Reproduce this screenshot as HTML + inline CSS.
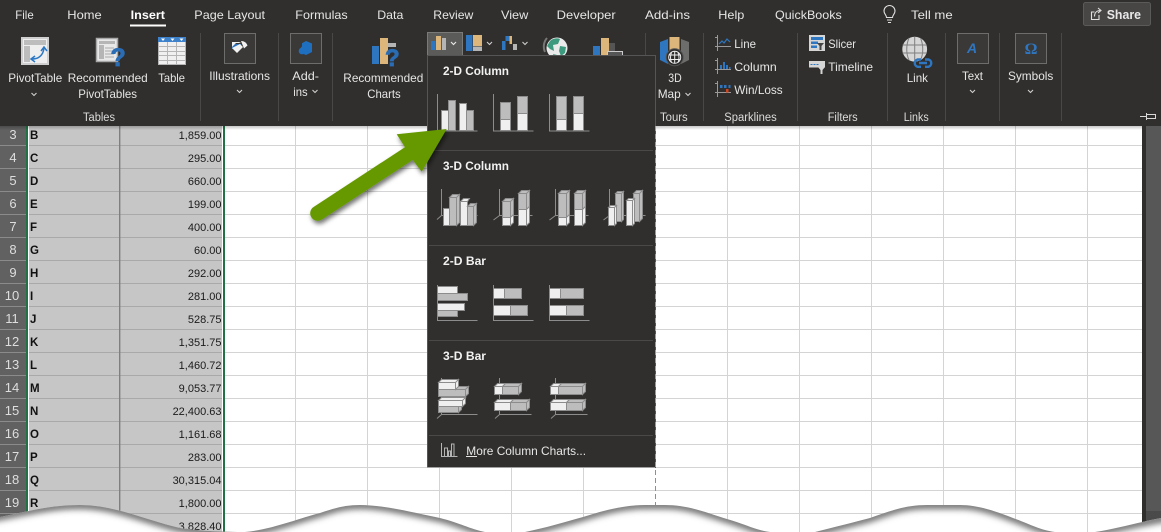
<!DOCTYPE html>
<html><head><meta charset="utf-8"><title>Excel Insert Column Chart</title>
<style>
html,body{margin:0;padding:0;background:#fff;width:1161px;height:532px;overflow:hidden}
svg{display:block;position:absolute;left:0;top:0}
text{font-family:"Liberation Sans",sans-serif}
.t{font-size:12px;fill:#e6e6e6}
.g{font-size:11.5px;fill:#dcdcdc}
.h{font-size:11.5px;font-weight:bold;fill:#f2f2f2}
.r{font-size:13px;fill:#dedede;text-anchor:middle}
.a{font-size:11.5px;font-weight:bold;fill:#111}
.v{font-size:11px;fill:#1a1a1a;text-anchor:end}
.w{fill:#efefef;stroke:#8c8c8c;stroke-width:1}
.y{fill:#bdbdbd;stroke:#8c8c8c;stroke-width:1}
.l{fill:none;stroke:#8c8c8c;stroke-width:1}
</style></head><body>
<svg width="1161" height="532" viewBox="0 0 1161 532" xmlns="http://www.w3.org/2000/svg">
<defs>
<linearGradient id="sh" x1="0" y1="0" x2="0" y2="1"><stop offset="0" stop-color="#000" stop-opacity=".22"/><stop offset="1" stop-color="#000" stop-opacity="0"/></linearGradient>
<filter id="b3" filterUnits="userSpaceOnUse" x="-20" y="480" width="1201" height="80"><feGaussianBlur stdDeviation="3.2"/></filter>
<filter id="ds" x="-20%" y="-20%" width="150%" height="150%"><feDropShadow dx="1.5" dy="3" stdDeviation="2.5" flood-color="#000" flood-opacity=".55"/></filter>
<clipPath id="wc"><path d="M0 517C30 511 50 505 80 505C115 505 145 520 180 528C200 531 225 532 245 532C270 530 300 518 320 513C335 508 345 505 360 505C385 505 415 513 440 518C460 523 470 529 485 532L525 532C545 528 565 522 583 517C605 510 625 505 645 505L665 505C690 505 710 514 727 519C745 524 755 530 770 532L815 532C835 527 855 522 870 518C890 511 905 505 927 505L960 505C980 505 1000 513 1013 518C1030 524 1040 530 1055 532L1095 532C1115 529 1140 522 1161 518L1161 540L0 540Z"/></clipPath>
</defs>

<!-- sheet -->
<rect width="1161" height="532" fill="#fff"/>
<path fill="none" stroke="#d4d4d4" d="M225 145.5H1142M225 168.5H1142M225 191.5H1142M225 214.5H1142M225 237.5H1142M225 260.5H1142M225 283.5H1142M225 306.5H1142M225 329.5H1142M225 352.5H1142M225 375.5H1142M225 398.5H1142M225 421.5H1142M225 444.5H1142M225 467.5H1142M225 490.5H1142M225 513.5H1142M295.5 126V532M367.5 126V532M439.5 126V532M511.5 126V532M583.5 126V532M727.5 126V532M799.5 126V532M871.5 126V532M943.5 126V532M1015.5 126V532M1087.5 126V532"/>
<path stroke="#8f8f8f" stroke-dasharray="5 3" d="M655.5 126V510"/>
<rect x="0" y="126" width="26" height="406" fill="#616161"/>
<rect x="26" y="126" width="2" height="406" fill="#217346"/>
<rect x="28" y="126" width="1" height="406" fill="#fff"/>
<rect x="29" y="126" width="193" height="406" fill="#c6c6c6"/>
<rect x="222" y="126" width="1" height="406" fill="#fff"/>
<rect x="223" y="126" width="2" height="406" fill="#217346"/>
<path stroke="#a9a9a9" fill="none" d="M29 145.5H222M29 168.5H222M29 191.5H222M29 214.5H222M29 237.5H222M29 260.5H222M29 283.5H222M29 306.5H222M29 329.5H222M29 352.5H222M29 375.5H222M29 398.5H222M29 421.5H222M29 444.5H222M29 467.5H222M29 490.5H222M29 513.5H222"/>
<path stroke="#8b8b8b" fill="none" d="M0 145.5H26M0 168.5H26M0 191.5H26M0 214.5H26M0 237.5H26M0 260.5H26M0 283.5H26M0 306.5H26M0 329.5H26M0 352.5H26M0 375.5H26M0 398.5H26M0 421.5H26M0 444.5H26M0 467.5H26M0 490.5H26M0 513.5H26"/>
<rect x="119" y="126" width="1.4" height="406" fill="#7f7f7f"/>
<rect x="1142" y="126" width="4" height="406" fill="#2f2e2d"/>
<rect x="1146" y="126" width="15" height="385" fill="#575757"/>
<rect x="1146" y="511" width="15" height="21" fill="#4a4a4a"/>

<text class="r" x="13" y="139">3</text><text class="a" x="30" y="139">B</text><text class="v" x="221.5" y="139">1,859.00</text>
<text class="r" x="13" y="162">4</text><text class="a" x="30" y="162">C</text><text class="v" x="221.5" y="162">295.00</text>
<text class="r" x="13" y="185">5</text><text class="a" x="30" y="185">D</text><text class="v" x="221.5" y="185">660.00</text>
<text class="r" x="13" y="208">6</text><text class="a" x="30" y="208">E</text><text class="v" x="221.5" y="208">199.00</text>
<text class="r" x="13" y="231">7</text><text class="a" x="30" y="231">F</text><text class="v" x="221.5" y="231">400.00</text>
<text class="r" x="13" y="254">8</text><text class="a" x="30" y="254">G</text><text class="v" x="221.5" y="254">60.00</text>
<text class="r" x="13" y="277">9</text><text class="a" x="30" y="277">H</text><text class="v" x="221.5" y="277">292.00</text>
<text class="r" x="12" y="300">10</text><text class="a" x="30" y="300">I</text><text class="v" x="221.5" y="300">281.00</text>
<text class="r" x="12" y="323">11</text><text class="a" x="30" y="323">J</text><text class="v" x="221.5" y="323">528.75</text>
<text class="r" x="12" y="346">12</text><text class="a" x="30" y="346">K</text><text class="v" x="221.5" y="346">1,351.75</text>
<text class="r" x="12" y="369">13</text><text class="a" x="30" y="369">L</text><text class="v" x="221.5" y="369">1,460.72</text>
<text class="r" x="12" y="392">14</text><text class="a" x="30" y="392">M</text><text class="v" x="221.5" y="392">9,053.77</text>
<text class="r" x="12" y="415">15</text><text class="a" x="30" y="415">N</text><text class="v" x="221.5" y="415">22,400.63</text>
<text class="r" x="12" y="438">16</text><text class="a" x="30" y="438">O</text><text class="v" x="221.5" y="438">1,161.68</text>
<text class="r" x="12" y="461">17</text><text class="a" x="30" y="461">P</text><text class="v" x="221.5" y="461">283.00</text>
<text class="r" x="12" y="484">18</text><text class="a" x="30" y="484">Q</text><text class="v" x="221.5" y="484">30,315.04</text>
<text class="r" x="12" y="507">19</text><text class="a" x="30" y="507">R</text><text class="v" x="221.5" y="507">1,800.00</text>
<text class="v" x="221.5" y="530">3,828.40</text>

<!-- ribbon -->
<rect x="0" y="126" width="1142" height="4" fill="url(#sh)"/>
<rect width="1161" height="126" fill="#302f2d"/>

<!-- tabs -->
<text class="t" x="15.3" y="19" textLength="18.4" lengthAdjust="spacingAndGlyphs">File</text>
<text class="t" x="67.3" y="19" textLength="34.4" lengthAdjust="spacingAndGlyphs">Home</text>
<text class="t" x="130.7" y="19" textLength="34.3" lengthAdjust="spacingAndGlyphs" style="fill:#fff;font-weight:bold">Insert</text>
<rect x="130" y="24.5" width="36" height="2" fill="#fff"/>
<text class="t" x="194.3" y="19" textLength="70.7" lengthAdjust="spacingAndGlyphs">Page Layout</text>
<text class="t" x="295.3" y="19" textLength="52.4" lengthAdjust="spacingAndGlyphs">Formulas</text>
<text class="t" x="377.3" y="19" textLength="26" lengthAdjust="spacingAndGlyphs">Data</text>
<text class="t" x="433.3" y="19" textLength="40" lengthAdjust="spacingAndGlyphs">Review</text>
<text class="t" x="501" y="19" textLength="27.3" lengthAdjust="spacingAndGlyphs">View</text>
<text class="t" x="556.7" y="19" textLength="59" lengthAdjust="spacingAndGlyphs">Developer</text>
<text class="t" x="645" y="19" textLength="45" lengthAdjust="spacingAndGlyphs">Add-ins</text>
<text class="t" x="718.3" y="19" textLength="26" lengthAdjust="spacingAndGlyphs">Help</text>
<text class="t" x="775" y="19" textLength="66.7" lengthAdjust="spacingAndGlyphs">QuickBooks</text>
<text class="t" x="911" y="19" textLength="41.7" lengthAdjust="spacingAndGlyphs">Tell me</text>
<!-- bulb -->
<path fill="none" stroke="#e0e0e0" stroke-width="1.1" d="M886.5 17.5c0-2.5-2.5-3.5-2.5-6.5a5.5 5.5 0 0 1 11 0c0 3-2.5 4-2.5 6.5zM887 20h5M888 22.5h3"/>
<!-- share -->
<rect x="1083.5" y="2.5" width="67" height="23" rx="2" fill="#474645" stroke="#5a5a58"/>
<path fill="none" stroke="#e0e0e0" stroke-width="1.1" d="M1099 15v4.500h-7.500V12h3M1094.500 16.500c0-4 2.500-6 6-6M1098 8l3 2.500-3 2.500"/>
<text x="1106.7" y="19" textLength="34.3" lengthAdjust="spacingAndGlyphs" style="font-size:12.5px;font-weight:bold;fill:#e8e8e8">Share</text>

<!-- separators -->
<path stroke="#494847" fill="none" d="M200.5 33V121M278.5 33V121M332.5 33V121M645.5 33V121M703.5 33V121M797.5 33V121M887.5 33V121M945.5 33V121M999.5 33V121M1061.5 33V121"/>

<!-- ribbon labels -->
<text class="t" x="8.3" y="82" textLength="54" lengthAdjust="spacingAndGlyphs">PivotTable</text>
<text class="t" x="67.7" y="82" textLength="80" lengthAdjust="spacingAndGlyphs">Recommended</text>
<text class="t" x="78.3" y="98" textLength="58.7" lengthAdjust="spacingAndGlyphs">PivotTables</text>
<text class="t" x="158.3" y="82" textLength="26.7" lengthAdjust="spacingAndGlyphs">Table</text>
<text class="g" x="83" y="121" textLength="32" lengthAdjust="spacingAndGlyphs">Tables</text>
<text class="t" x="209.3" y="80" textLength="60.7" lengthAdjust="spacingAndGlyphs">Illustrations</text>
<text class="t" x="292.3" y="80" textLength="26.7" lengthAdjust="spacingAndGlyphs">Add-</text>
<text class="t" x="293.3" y="96" textLength="14.4" lengthAdjust="spacingAndGlyphs">ins</text>
<text class="t" x="343.3" y="82" textLength="80" lengthAdjust="spacingAndGlyphs">Recommended</text>
<text class="t" x="367.3" y="98" textLength="33.4" lengthAdjust="spacingAndGlyphs">Charts</text>
<text class="t" x="668.3" y="82" textLength="13.4" lengthAdjust="spacingAndGlyphs">3D</text>
<text class="t" x="657.7" y="98" textLength="23" lengthAdjust="spacingAndGlyphs">Map</text>
<text class="g" x="660" y="121" textLength="27.7" lengthAdjust="spacingAndGlyphs">Tours</text>
<text class="t" x="734.3" y="48" textLength="21.7" lengthAdjust="spacingAndGlyphs">Line</text>
<text class="t" x="734.3" y="71" textLength="42.4" lengthAdjust="spacingAndGlyphs">Column</text>
<text class="t" x="734.3" y="94" textLength="48.4" lengthAdjust="spacingAndGlyphs">Win/Loss</text>
<text class="g" x="724.3" y="121" textLength="52.4" lengthAdjust="spacingAndGlyphs">Sparklines</text>
<text class="t" x="828.3" y="48" textLength="27.7" lengthAdjust="spacingAndGlyphs">Slicer</text>
<text class="t" x="828.3" y="71" textLength="44.7" lengthAdjust="spacingAndGlyphs">Timeline</text>
<text class="g" x="827.7" y="121" textLength="30" lengthAdjust="spacingAndGlyphs">Filters</text>
<text class="t" x="906.7" y="82" textLength="21.3" lengthAdjust="spacingAndGlyphs">Link</text>
<text class="g" x="903.7" y="121" textLength="25" lengthAdjust="spacingAndGlyphs">Links</text>
<text class="t" x="962" y="80" textLength="21" lengthAdjust="spacingAndGlyphs">Text</text>
<text class="t" x="1008" y="80" textLength="45.3" lengthAdjust="spacingAndGlyphs">Symbols</text>

<!-- chevrons -->
<path fill="none" stroke="#d0d0d0" stroke-width="1.1" d="M31.5 93l2.5 2.500 2.500-2.500M237 90l2.500 2.500 2.500-2.500M312.500 90l2.500 2.500 2.500-2.500M685.500 93l2.500 2.500 2.500-2.500M970 90l2.500 2.500 2.500-2.500M1028 90l2.500 2.500 2.500-2.500M487 42l2.500 2.500 2.500-2.500M522.500 42l2.500 2.500 2.500-2.500"/>

<!-- PivotTable icon -->
<rect x="21" y="37" width="28" height="28" fill="#cfcfcf"/><rect x="23" y="39" width="24" height="24" fill="#efefef"/>
<rect x="24" y="40" width="22" height="5" fill="#bdbdbd"/><rect x="24" y="46" width="6" height="16" fill="#bdbdbd"/>
<path fill="none" stroke="#2b78c5" stroke-width="1.5" d="M32 59c6 0 11-3 12-11M41 51l3-4 3 4M35 56l-4 3 4 3"/>
<!-- Rec pivot -->
<rect x="96.5" y="38.5" width="21" height="23" fill="#e8e8e8" stroke="#a8a8a8" stroke-width="1.5"/>
<rect x="99" y="41" width="16" height="3" fill="#b5b5b5"/><rect x="99" y="45" width="5" height="14" fill="#b5b5b5"/><path stroke="#aaa" d="M105 48h9M105 51h9M105 54h9M105 57h9"/>
<text x="110.5" y="66" style="font-size:25px;font-weight:bold;fill:#2a6db5;stroke:#2a6db5;stroke-width:.8">?</text>
<!-- Table icon -->
<rect x="158" y="37" width="28" height="28" fill="#f0f0f0"/><rect x="158" y="37" width="28" height="5" fill="#3f82cc"/>
<path fill="none" stroke="#b5b5b5" d="M158 46.5h28M158 51.5h28M158 55.5h28M158 60.5h28M158 64.5h28M158.5 42v23M167.5 42v23M176.5 42v23M185.5 42v23"/>
<path fill="#fff" d="M161 38.5h4l-2 2.5zM170.5 38.500h4l-2 2.500zM179.500 38.500h4l-2 2.500z"/>
<!-- Illustrations box -->
<rect x="224.5" y="33.500" width="31" height="30" fill="#3a3938" stroke="#6d6d6b"/>
<path fill="#2b6fb8" d="M232 44h9v5h-9z"/><path fill="#f2f2f2" d="M232 48l5 5 6-6-3-3zM232 47l4-4h5l-2-1h-7z"/><path fill="#f2f2f2" d="M241 41a6.500 6.500 0 0 1 6.500 4.500l-3.500 3z"/>
<!-- Add-ins box -->
<rect x="290.5" y="33.500" width="31" height="30" fill="#3a3938" stroke="#6d6d6b"/>
<path fill="#1f6fc0" d="M306 41l6 2.500v8.500l-6 3-3-1.200v-4l-3-1 2-2.500v-3z"/><circle cx="302" cy="51" r="3.300" fill="#1f6fc0"/>
<!-- Rec charts -->
<rect x="372" y="46" width="7" height="18" fill="#2f76c0"/><rect x="380" y="38" width="8" height="26" fill="#dcb67a"/><rect x="388" y="43" width="8" height="4" fill="#b5b5b5"/>
<text x="385" y="66" style="font-size:24px;font-weight:bold;fill:#2a6db5;stroke:#2a6db5;stroke-width:.8">?</text>

<!-- chart type row -->
<rect x="427.5" y="32.500" width="35" height="23" fill="#5b5b5a" stroke="#7a7a78"/>
<rect x="431" y="41" width="4.500" height="9" fill="#2f76c0"/><rect x="436" y="36" width="5" height="14" fill="#dcb67a"/><rect x="442" y="38" width="4" height="12" fill="#b5b5b5"/>
<path fill="none" stroke="#e6e6e6" stroke-width="1.200" d="M451 42l2.500 2.500 2.500-2.500"/>
<rect x="466" y="35" width="6.500" height="16" fill="#2f76c0"/><rect x="473" y="35" width="9" height="11" fill="#dcb67a"/><rect x="473" y="46.500" width="9" height="4.500" fill="#b5b5b5"/>
<rect x="502" y="41" width="3.500" height="9" fill="#2f76c0"/><path fill="#2f76c0" d="M505.500 41v-5h4v5z"/><rect x="509.500" y="36" width="2.500" height="8" fill="#dcb67a"/><rect x="513" y="44" width="4" height="6" fill="#b5b5b5"/>
<path fill="none" stroke="#777" stroke-width="2" d="M547 38a13 13 0 0 0-2 14"/>
<circle cx="557" cy="48" r="10.500" fill="#eaeaea"/><path fill="#3d9a7f" d="M550 41c3-3 8-3 10-2l-2 5-5 1 1 6-4-2-3-3zM560 46l6 1-1 6-4 3-2-5zM553 54l4 1v3l-3-1z"/>
<rect x="593" y="46" width="7" height="10" fill="#2f76c0"/><rect x="601" y="38" width="8" height="18" fill="#dcb67a"/><rect x="609" y="43" width="6" height="13" fill="#555"/><rect x="607.500" y="51.500" width="15" height="6" fill="#555" stroke="#ccc"/>

<!-- 3D Map -->
<path fill="#2f76c0" d="M660 42l8-3v25l-8-4z"/><path fill="#dcb67a" d="M669.500 37h10v15h-10z"/><path fill="#6d6d6b" d="M681 39l8 3v18l-8 4z"/>
<circle cx="674.7" cy="57.300" r="8.500" fill="#2c2b2a" stroke="#555"/><g fill="none" stroke="#eee"><circle cx="674.7" cy="57.300" r="6"/><path d="M668.700 55h12M668.700 59.500h12M674.700 51.300v12M671.500 52.500c-1.200 3-1.200 7 0 10M678 52.500c1.200 3 1.200 7 0 10"/></g>

<!-- sparklines -->
<g fill="none" stroke="#9a9a9a"><path d="M717.500 35v16M715 37.500h3M715 46.500h16M717.500 58v16M715 60.500h3M715 69.500h16M717.500 81v16M715 83.500h3M715 92.500h16"/></g>
<path fill="none" stroke="#2f76c0" stroke-width="1.200" d="M719 44l3-3 2 2 3-4 3 3"/>
<path fill="#2f76c0" d="M720 65h2v4h-2zM723 62h2v7h-2zM726 65h2v4h-2zM729 67h1.500v2H729z"/>
<path fill="#2f76c0" d="M720 85h2.500v3H720zM724 85h2.500v3H724zM728.500 85h2v3h-2z"/><rect x="726" y="89" width="2.500" height="3.500" fill="#d0431f"/>

<!-- slicer -->
<rect x="809" y="35" width="16" height="16" fill="#d5d5d5"/><rect x="811" y="37" width="12" height="3" fill="#2f76c0"/><rect x="811" y="41.500" width="7" height="2.500" fill="#2f76c0"/><rect x="811" y="45.500" width="6" height="2.500" fill="#2f76c0"/><path fill="#444" d="M817 43h7l-2.500 3v4h-2v-4z"/>
<rect x="809" y="61" width="16" height="6.500" fill="#d5d5d5"/><path stroke="#2f76c0" stroke-dasharray="2 1" d="M810.500 64.500h9"/><path fill="#d5d5d5" d="M818 67h7l-2.500 3v4h-2v-4z"/>

<!-- link -->
<circle cx="914.7" cy="49.200" r="12.400" fill="#d6d6d6"/><g fill="none" stroke="#7f7f7f"><path d="M902.500 45h24.400M902.500 53h24.400M914.700 37v24.500M909 38c-3 7-3 16 0 22M920.500 38c3 7 3 16 0 22"/></g>
<path fill="none" stroke="#2f76c0" stroke-width="2.400" d="M921 59.500h-3.500a3.800 3.800 0 0 0 0 7.300H921M925 59.500h3.500a3.800 3.800 0 0 1 0 7.300H925M919 63h8"/>

<!-- Text / Symbols -->
<rect x="957.5" y="33.500" width="31" height="30" fill="#3a3938" stroke="#6d6d6b"/>
<text x="967" y="53" style="font-size:14px;font-weight:bold;font-style:italic;fill:#2f76c0">A</text>
<rect x="1015.5" y="33.500" width="31" height="30" fill="#3a3938" stroke="#6d6d6b"/>
<text x="1031" y="54" text-anchor="middle" style="font-size:16px;font-weight:bold;fill:#2f76c0;font-family:'Liberation Serif',serif">Ω</text>

<!-- pin -->
<path fill="none" stroke="#d8d8d8" d="M1140 116.500h6M1146.500 113v7M1146.500 114.500h9v4h-9z"/>

<!-- dropdown panel -->
<rect x="427.5" y="55.500" width="228" height="412" fill="#302f2d" stroke="#555"/>
<path stroke="#a0a0a0" d="M427 467.500h228"/>
<path stroke="#4a4947" d="M429 150.500h224M429 245.500h224M429 340.500h224M429 435.500h224"/>
<path stroke="#9a9a9a" stroke-dasharray="5 3" d="M655.500 126V467"/>
<text class="h" x="443" y="75" textLength="66" lengthAdjust="spacingAndGlyphs">2-D Column</text>
<text class="h" x="443" y="170" textLength="66" lengthAdjust="spacingAndGlyphs">3-D Column</text>
<text class="h" x="443" y="265" textLength="43" lengthAdjust="spacingAndGlyphs">2-D Bar</text>
<text class="h" x="443" y="360" textLength="43" lengthAdjust="spacingAndGlyphs">3-D Bar</text>

<!-- 2D column icons -->
<path class="l" d="M437.500 94v37h40M493.500 94v37h40M549.500 94v37h40"/>
<rect class="w" x="441.5" y="110.500" width="7" height="20"/><rect class="y" x="448.5" y="100.500" width="7" height="30"/><rect class="w" x="459.5" y="103.500" width="7" height="27"/><rect class="y" x="466.5" y="110.500" width="7" height="20"/>
<rect class="y" x="500.5" y="102.500" width="10" height="17"/><rect class="w" x="500.5" y="119.500" width="10" height="11"/><rect class="y" x="517.5" y="96.500" width="10" height="17"/><rect class="w" x="517.5" y="113.500" width="10" height="17"/>
<rect class="y" x="556.5" y="96.500" width="10" height="23"/><rect class="w" x="556.5" y="119.500" width="10" height="11"/><rect class="y" x="573.5" y="96.500" width="10" height="17"/><rect class="w" x="573.5" y="113.500" width="10" height="17"/>

<!-- 3D column icons -->
<path class="l" d="M441.500 189v26.500l-4.500 4M441.500 215.500h36M499.500 189v26.500l-6 4.500M499.500 215.500h33M555.500 189v26.500l-6 4.500M555.500 215.500h33M609.500 189v26.500l-6 4.500M609.500 215.500h36"/>
<path class="y" d="M449.500 197.500h7v28h-7zM456.500 197.500l3-3v28l-3 3zM449.500 197.500l3-3h7l-3 3z"/>
<path class="w" d="M443.500 208.500h6v17h-6z"/>
<path class="w" d="M460.500 201.500h7v24h-7zM460.500 201.500l3-3h6l-2 3z"/>
<path class="y" d="M467.500 206.500h6v19h-6zM473.500 206.500l3-3v19l-3 3zM467.500 206.500l3-3h6l-3 3z"/>
<path class="y" d="M502.500 201.500h8v16h-8zM510.500 201.500l3-3v16l-3 3zM502.500 201.500l3-3h8l-3 3z"/><path class="w" d="M502.500 217.500h8v8h-8zM510.500 217.500l3-3v8l-3 3z"/>
<path class="y" d="M518.500 193.500h8v16h-8zM526.500 193.500l3-3v16l-3 3zM518.500 193.500l3-3h8l-3 3z"/><path class="w" d="M518.500 209.500h8v16h-8zM526.500 209.500l3-3v16l-3 3z"/>
<path class="y" d="M558.500 193.500h8v24h-8zM566.500 193.500l3-3v24l-3 3zM558.500 193.500l3-3h8l-3 3z"/><path class="w" d="M558.500 217.500h8v8h-8zM566.500 217.500l3-3v8l-3 3z"/>
<path class="y" d="M574.500 193.500h8v16h-8zM582.500 193.500l3-3v16l-3 3zM574.500 193.500l3-3h8l-3 3z"/><path class="w" d="M574.500 209.500h8v16h-8zM582.500 209.500l3-3v16l-3 3z"/>
<path class="y" d="M615.500 193.500h6v28h-6zM621.500 193.500l2-2v28l-2 2zM615.500 193.500l2-2h6l-2 2z"/>
<path class="y" d="M633.500 193.500h6v28h-6zM639.500 193.500l3-3v28l-3 3zM633.500 193.500l3-3h6l-3 3z"/>
<path class="w" d="M608.500 207.500h6v18h-6zM614.500 207.500l2-2v18l-2 2zM608.500 207.500l2-2h6l-2 2z"/>
<path class="w" d="M626.500 200.500h6v25h-6zM632.500 200.500l2-2v25l-2 2zM626.500 200.500l2-2h6l-2 2z"/>

<!-- 2D bar icons -->
<path class="l" d="M437.500 285v35.500h40M493.500 285v35.500h40M549.500 285v35.500h40"/>
<rect class="w" x="437.5" y="286.500" width="20" height="7"/><rect class="y" x="437.5" y="293.500" width="30" height="7"/><rect class="w" x="437.5" y="303.500" width="27" height="7"/><rect class="y" x="437.5" y="310.500" width="20" height="6"/>
<rect class="w" x="493.5" y="288.500" width="11" height="10"/><rect class="y" x="504.5" y="288.500" width="17" height="10"/><rect class="w" x="493.5" y="305.500" width="17" height="10"/><rect class="y" x="510.5" y="305.500" width="17" height="10"/>
<rect class="w" x="549.5" y="288.500" width="11" height="10"/><rect class="y" x="560.5" y="288.500" width="23" height="10"/><rect class="w" x="549.5" y="305.500" width="17" height="10"/><rect class="y" x="566.5" y="305.500" width="17" height="10"/>

<!-- 3D bar icons -->
<path class="l" d="M441.500 378v36.500l-4.500 4M441.500 414.500h36M499.500 378v36.500l-4.500 4M499.500 414.500h32M555.500 378v36.500l-4.500 4M555.500 414.500h32"/>
<path class="y" d="M438.500 389.500h27v7h-27zM465.500 389.500l3-3v7l-3 3zM455 389.500l3-3h10.500l-3 3z"/>
<path class="w" d="M438.500 382.500h17v7h-17zM455.500 382.500l3-3v7l-3 3zM438.500 382.500l3-3h17l-3 3z"/>
<path class="y" d="M438.500 406.500h20v6h-20zM458.500 406.500l3-3v6l-3 3z"/>
<path class="w" d="M438.500 400.500h24v6h-24zM462.500 400.500l3-3v6l-3 3zM438.500 400.500l3-3h24l-3 3z"/>
<path class="w" d="M494.500 386.500h8v8h-8zM494.500 386.500l3-3h8l-3 3z"/><path class="y" d="M502.500 386.500h16v8h-16zM518.500 386.500l3-3v8l-3 3zM502.500 386.500l3-3h16l-3 3z"/>
<path class="w" d="M494.500 402.500h16v8h-16zM494.500 402.500l3-3h16l-3 3z"/><path class="y" d="M510.500 402.500h16v8h-16zM526.500 402.500l3-3v8l-3 3zM510.500 402.500l3-3h16l-3 3z"/>
<path class="w" d="M550.500 386.500h8v8h-8zM550.500 386.500l3-3h8l-3 3z"/><path class="y" d="M558.500 386.500h24v8h-24zM582.500 386.500l3-3v8l-3 3zM558.500 386.500l3-3h24l-3 3z"/>
<path class="w" d="M550.500 402.500h16v8h-16zM550.500 402.500l3-3h16l-3 3z"/><path class="y" d="M566.500 402.500h16v8h-16zM582.500 402.500l3-3v8l-3 3zM566.500 402.500l3-3h16l-3 3z"/>

<!-- More charts -->
<path fill="none" stroke="#b5b5b5" d="M441.500 443v13.500h16M444.500 456v-8h3v8M448.500 456v-5h2v5M451.500 456v-12h2.500v12"/>
<text class="t" x="466.3" y="455" textLength="119.700" lengthAdjust="spacingAndGlyphs">More Column Charts...</text>
<rect x="466" y="456" width="11" height="1" fill="#e6e6e6"/>

<!-- arrow -->
<g filter="url(#ds)"><path fill="none" stroke="#669900" stroke-width="15" stroke-linecap="round" d="M408.800 153.600L317.700 213.300"/><path fill="#669900" d="M446.700 129L396.700 134.300 405 147.300 412.700 160 421.700 171.700z"/></g>

<!-- torn edge -->
<path fill="#fff" d="M0 517C30 511 50 505 80 505C115 505 145 520 180 528C200 531 225 532 245 532C270 530 300 518 320 513C335 508 345 505 360 505C385 505 415 513 440 518C460 523 470 529 485 532L525 532C545 528 565 522 583 517C605 510 625 505 645 505L665 505C690 505 710 514 727 519C745 524 755 530 770 532L815 532C835 527 855 522 870 518C890 511 905 505 927 505L960 505C980 505 1000 513 1013 518C1030 524 1040 530 1055 532L1095 532C1115 529 1140 522 1161 518L1161 540L0 540Z"/>
<g clip-path="url(#wc)"><path fill="none" stroke="#6a6a6a" stroke-width="8" filter="url(#b3)" d="M-20 520C30 511 50 505 80 505C115 505 145 520 180 528C200 531 225 532 245 532C270 530 300 518 320 513C335 508 345 505 360 505C385 505 415 513 440 518C460 523 470 529 485 532L525 532C545 528 565 522 583 517C605 510 625 505 645 505L665 505C690 505 710 514 727 519C745 524 755 530 770 532L815 532C835 527 855 522 870 518C890 511 905 505 927 505L960 505C980 505 1000 513 1013 518C1030 524 1040 530 1055 532L1095 532C1115 529 1140 522 1181 515"/></g>
</svg>
</body></html>
